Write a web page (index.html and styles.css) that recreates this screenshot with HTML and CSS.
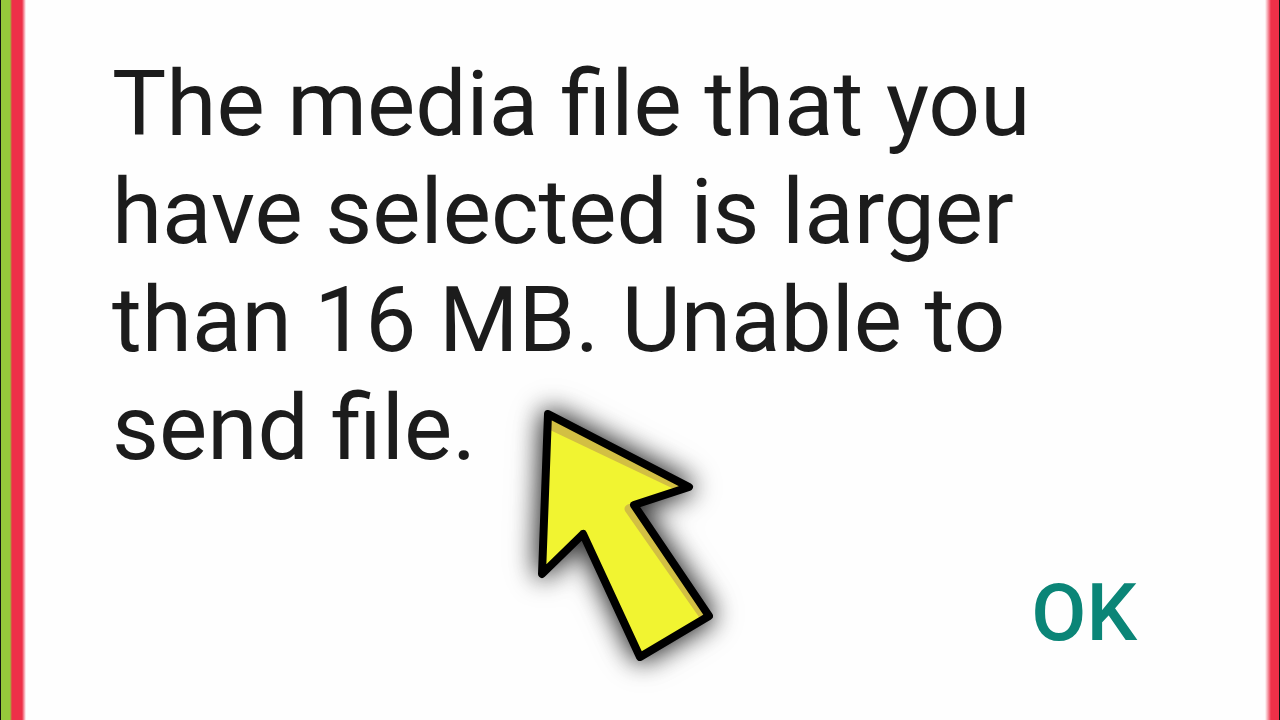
FILE: index.html
```html
<!DOCTYPE html>
<html lang="en">
<head>
    <meta charset="UTF-8">
    <meta name="viewport" content="width=device-width, initial-scale=1.0">
    <title>Unable to send file</title>
    <link rel="stylesheet" href="styles.css">
</head>
<body>
    <div class="frame">
        <main class="dialog" role="alertdialog" aria-labelledby="message">
            <p class="message" id="message">The media file that you<br>have selected is larger<br>than 16 MB. Unable to<br>send file.</p>
            <div class="actions">
                <button type="button" class="ok">OK</button>
            </div>
            <svg class="arrow" width="260" height="320" viewBox="0 0 260 320" aria-hidden="true">
                <path class="arrow-body" d="M48 34 L189 107 L134 125 L209 236 L140 277 L83 154 L42 194 Z"/>
                <path class="arrow-shade" d="M50 39 L184 106 L174 109 L50 50 Z M134 125 L207 234 L199 237 L125 131 Q123 126 129 124 Z"/>
                <path class="arrow-outline" d="M48 34 L189 107 L134 125 L209 236 L140 277 L83 154 L42 194 Z"/>
            </svg>
        </main>
    </div>
</body>
</html>
```
FILE: styles.css
```css
* {
    box-sizing: border-box;
}
body {
    margin: 0;
    font-family: Roboto, sans-serif;
    background: #fefefe;
}
.frame {
    min-height: 100vh;
    display: flex;
    border-left: 1px solid #111;
    border-right: 1px solid #111;
    background: linear-gradient(to right, #96c93b 9px, #ee3048 11px);
    padding: 0 8px 0 21px;
}
.dialog {
    position: relative;
    flex: 1;
    display: flex;
    flex-direction: column;
    justify-content: space-between;
    padding: 50px 134px 60px 90px;
    background: linear-gradient(to right, #ee3048, #fefefe 4px, #fefefe calc(100% - 6px), #ee3048);
}
.message {
    margin: 0;
    font-size: 91px;
    line-height: 108px;
    color: #1c1c1c;
    white-space: nowrap;
}
.actions {
    display: flex;
    justify-content: flex-end;
}
.ok {
    padding: 0;
    border: none;
    background: none;
    font-family: inherit;
    font-size: 80px;
    font-weight: 500;
    line-height: 94px;
    color: #0b8577;
    cursor: pointer;
}
.arrow {
    position: absolute;
    top: 380px;
    left: 478px;
    overflow: visible;
    filter: drop-shadow(0 0 14px rgba(0, 0, 0, 0.8)) drop-shadow(0 0 10px rgba(0, 0, 0, 0.3));
}
.arrow-body {
    fill: #f1f431;
}
.arrow-shade {
    fill: #d2bf43;
}
.arrow-outline {
    fill: none;
    stroke: #000;
    stroke-width: 8;
    stroke-linejoin: round;
}
```
